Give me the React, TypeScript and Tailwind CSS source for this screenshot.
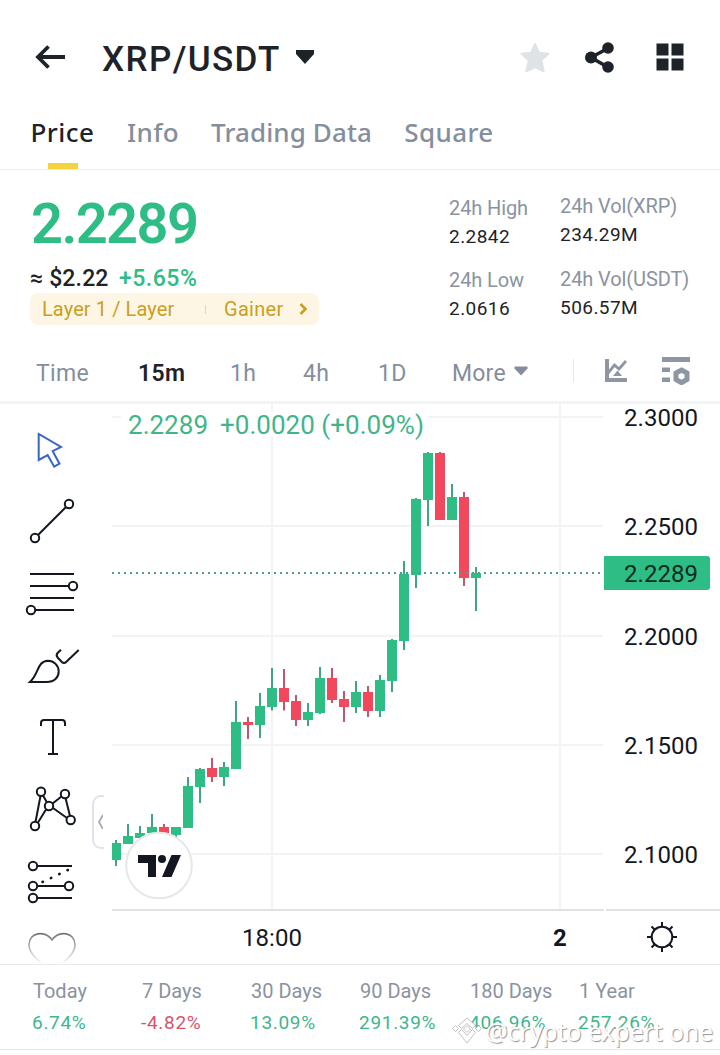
import { useState } from 'react';

type Candle = [high: number, top: number, bottom: number, low: number, up: boolean];

const GREEN = '#2ebd85';
const RED = '#f1485e';

// Candles are 12px apart, each given as high / body top / body bottom / low
const candles: Candle[] = [
  [840, 843, 860, 866, true],
  [824, 836, 844, 844, true],
  [826, 833, 838, 839, true],
  [814, 827, 833, 833, true],
  [824, 827, 835, 835, false],
  [827, 827, 835, 838, true],
  [777, 786, 828, 828, true],
  [768, 769, 787, 803, true],
  [758, 768, 777, 782, false],
  [762, 767, 777, 786, true],
  [701, 722, 769, 769, true],
  [717, 722, 725, 739, false],
  [693, 706, 725, 738, true],
  [668, 688, 707, 710.5, true],
  [669, 688, 702, 710.5, false],
  [695, 701, 720, 726, false],
  [703, 712, 720, 726, true],
  [667, 678, 713, 714, true],
  [668, 678, 700, 703, false],
  [691, 699, 707, 722, false],
  [681, 692, 707, 713, true],
  [686, 692, 711, 717, false],
  [675, 680, 711, 717, true],
  [639, 640, 681, 692, true],
  [561, 574, 641, 650, true],
  [498, 499, 575, 588, true],
  [452, 453, 500, 526, true],
  [452, 453, 520, 520, false],
  [484, 497, 520, 520, true],
  [492, 497, 578, 586, false],
  [567, 573, 578, 611, true]
];

const priceLevels = [
  { label: '2.3000', y: 417 },
  { label: '2.2500', y: 526 },
  { label: '2.2000', y: 636 },
  { label: '2.1500', y: 745 },
  { label: '2.1000', y: 854 }
];

const tabs = [
  { name: 'Price', className: 'w-[65px] tracking-[0.5px]' },
  { name: 'Info', className: 'w-[54px] tracking-[0.3px]' },
  { name: 'Trading Data', className: 'w-[161px] tracking-[0.1px]' },
  { name: 'Square', className: 'w-[92px] tracking-[0.4px]' }
];

const intervals = [
  { name: 'Time', className: 'w-[102px]' },
  { name: '15m', className: 'w-[92px]' },
  { name: '1h', className: 'w-[73px]' },
  { name: '4h', className: 'w-[75px]' },
  { name: '1D', className: 'w-[74px]' }
];

const stats = [
  { label: '24h High', value: '2.2842', className: 'pt-[2px]' },
  { label: '24h Vol(XRP)', value: '234.29M', className: '' },
  { label: '24h Low', value: '2.0616', className: 'pt-[1px]' },
  { label: '24h Vol(USDT)', value: '506.57M', className: '' }
];

const performance = [
  { label: 'Today', value: '6.74%', up: true, className: 'w-[109px]' },
  { label: '7 Days', value: '-4.82%', up: false, className: 'w-[109px]' },
  { label: '30 Days', value: '13.09%', up: true, className: 'w-[109px]' },
  { label: '90 Days', value: '291.39%', up: true, className: 'w-[110px]' },
  { label: '180 Days', value: '406.96%', up: true, className: 'w-[109px]' },
  { label: '1 Year', value: '257.26%', up: true, className: 'w-[100px]' }
];

function Header() {
  return (
    <header className="flex h-[108px] items-center pl-[35px] pr-9 pt-[6px]">
      <svg width="30" height="24" viewBox="0 0 30 24" fill="none" stroke="#1e2329" strokeWidth="3.8">
        <path d="M13.5 1.5 3 12l10.5 10.5M3 12h27" />
      </svg>
      <h1 className="ml-[37px] w-[178px] whitespace-nowrap pt-[4px] text-[35px] font-medium leading-none tracking-[1.4px] text-[#1e2329]">
        XRP/USDT
      </h1>
      <svg className="ml-[15px]" width="20" height="16" viewBox="0 0 20 16" fill="#1e2329">
        <path d="M1 1h18v4L10 15 1 5z" />
      </svg>
      <div className="ml-auto flex items-center gap-[35px]">
        <svg width="30" height="31" viewBox="0 0 30 31" fill="#dfe2e6" stroke="#dfe2e6" strokeWidth="2" strokeLinejoin="round">
          <path d="m15 2 4 8.8 9.5.9-7.2 6.6 2.4 11L15 25l-8.7 4.3 2.4-11-7.2-6.6 9.5-.9z" />
        </svg>
        <svg width="30" height="31" viewBox="0 0 30 31" fill="#1e2329">
          <path d="M23.5 6 6 15.5 23.5 25.5" fill="none" stroke="#1e2329" strokeWidth="3.6" />
          <circle cx="6" cy="15.5" r="6" />
          <circle cx="23" cy="6" r="5.8" />
          <circle cx="23" cy="25" r="5.8" />
        </svg>
        <svg className="ml-[6px]" width="28" height="28" viewBox="0 0 28 28" fill="#1e2329">
          <path d="M.5.5h12v12H.5zM15.5.5h12v12h-12zM.5 15.5h12v12H.5zM15.5 15.5h12v12h-12z" />
        </svg>
      </div>
    </header>
  );
}

function Ticker() {
  return (
    <section className="flex h-[170px] pl-[30px]">
      <div className="w-[419px] pt-[28px]">
        <div className="pl-[1px] text-[56px] font-semibold leading-[53px] tracking-[-1.6px] text-[#2ebd85]">2.2289</div>
        <div className="mt-[14px] flex text-[23px] font-medium leading-[27px]">
          <span className="w-[89px] whitespace-nowrap tracking-[0.15px] text-[#1e2329]">≈ $2.22</span>
          <span className="whitespace-nowrap tracking-[0.5px] text-[#2ebd85]">+5.65%</span>
        </div>
        <div className="mt-[1px] flex h-[32px] w-[289px] items-center rounded-lg bg-[#fef6e4] pl-3 text-[20px] text-[#c99f1e]">
          <span className="w-[163px] whitespace-nowrap tracking-[0.1px]">Layer 1 / Layer</span>
          <span className="h-[9px] w-px bg-[#ecd796]" />
          <span className="ml-[18px] w-[75px] tracking-[0.3px]">Gainer</span>
          <svg width="9" height="12" viewBox="0 0 9 12" fill="none" stroke="#c99f1e" strokeWidth="2.6">
            <path d="m1.5 1 5 5-5 5" />
          </svg>
        </div>
      </div>
      <div className="grid grid-cols-[111px_150px] content-start gap-y-[16px] pt-[22px]">
        {stats.map((stat) => (
          <div key={stat.label} className={`h-[57px] whitespace-nowrap ${stat.className}`}>
            <div className="text-[20px] leading-[28px] tracking-[-0.1px] text-[#8b939f]">{stat.label}</div>
            <div className="text-[19px] leading-[29px] tracking-[0.45px] text-[#1e2329]">{stat.value}</div>
          </div>
        ))}
      </div>
    </section>
  );
}

function IntervalBar() {
  const [active, setActive] = useState('15m');

  return (
    <nav className="flex h-[64px] items-center border-b-[3px] border-[#f2f3f4] pl-9 text-[23px] text-[#848e9c]">
      {intervals.map((item) => (
        <button
          key={item.name}
          onClick={() => setActive(item.name)}
          className={`pt-[7px] text-left tracking-[0.3px] ${item.className} ${active === item.name ? 'font-semibold text-[#1e2329]' : ''}`}
        >
          {item.name}
        </button>
      ))}
      <button className="flex w-[121px] items-center gap-[8px]">
        <span className="pt-[7px] tracking-[0.2px]">More</span>
        <svg width="14" height="10" viewBox="0 0 14 10" fill="#848e9c">
          <path d="M.5.5h13v2L7 9.500.5 2.500z" />
        </svg>
      </button>
      <span className="h-[23px] w-px bg-[#e3e6ea]" />
      <svg className="ml-[31px]" width="22" height="24" viewBox="0 0 22 24" fill="none" stroke="#8e96a3" strokeWidth="3">
        <path d="M2 0v21h20" strokeWidth="4" />
        <path d="M3 14 9.5 6l4.500 4L21 2" strokeWidth="2.8" />
        <path d="m8 17 4.500-5.500 4.500 5.500z" fill="#8e96a3" stroke="none" />
      </svg>
      <svg className="ml-[35px]" width="28" height="29" viewBox="0 0 28 29" fill="#8e96a3">
        <path d="M0 1h28v5H0zM0 11.500h8v4.500H0zM0 21.500h8v4.500H0z" />
        <path d="m19.500 14 5.500 3v6.500l-5.500 3.200-5.500-3.200V17z" fill="none" stroke="#8e96a3" strokeWidth="5" />
      </svg>
    </nav>
  );
}

const tools = [
  // cursor
  <path key="cursor" d="M38.700 19v26l9-4.800 6.500 11.500 5.300-3-6.800-12.500 8.300-4.200z" stroke="#3a66c8" />,
  // trend line
  <g key="trend">
    <path d="M38 48 66 20" />
    <circle cx="35" cy="51" r="4.200" />
    <circle cx="69" cy="17" r="4.200" />
  </g>,
  // fibonacci levels
  <g key="fib">
    <path d="M30 15h44M30 27h39M30 39h44M35 51h39" />
    <circle cx="73" cy="27" r="4.200" />
    <circle cx="31" cy="51" r="4.200" />
  </g>,
  // brush
  <g key="brush">
    <path d="M30 51C39 43 37 30 48 29.700c6 0 10.700 4.800 10.700 10.700 0 6-4.500 10.600-12 10.600z" />
    <path d="m61 18.700-3.200 3.100c-1.500 1.600-1.400 3.400 0 4.900l3.800 4c1.500 1.500 3.300 1.500 4.800 0L78.700 19" />
  </g>,
  // text
  <path key="text" d="M41 23v-3q0-3 3-3h18q3 0 3 3v3M53 17v34M48 51h10" />,
  // pattern
  <g key="pattern">
    <path d="m40.500 21-5 26M43 20.500l4 7M52.500 28.500l9-7M46 34.500 38 47.500M65.500 23l4.500 18M53 33l14 10" />
    <circle cx="41" cy="16.700" r="4.200" />
    <circle cx="65" cy="19" r="4.200" />
    <circle cx="49" cy="31" r="4.200" />
    <circle cx="35" cy="51" r="4.200" />
    <circle cx="70.700" cy="45" r="4.200" />
  </g>,
  // forecast
  <g key="forecast">
    <path d="M37 19h35M37 39h28M37 51h35" />
    <path d="m42.500 35 25.500-12" strokeDasharray="0.500 8.700" strokeLinecap="round" strokeWidth="2.600" />
    <circle cx="33" cy="19" r="4.200" />
    <circle cx="33" cy="39" r="4.200" />
    <circle cx="69" cy="39" r="4.200" />
    <circle cx="33" cy="51" r="4.200" />
  </g>,
  // favourites
  <path key="heart" d="M52 21c-7-10-23-8-23 5 0 11 16 20 23 27 7-7 23-16 23-27 0-13-16-15-23-5z" strokeWidth="1.600" />
];

function Toolbar() {
  return (
    <aside className="relative w-[104px] overflow-hidden pt-[11px]">
      {tools.map((tool, i) => (
        <svg key={i} className="block" width="104" height="72" viewBox="0 0 104 72" fill="none" stroke="#131722" strokeWidth="2">
          {tool}
        </svg>
      ))}
      <div className="absolute inset-x-0 bottom-0 h-[46px] bg-gradient-to-t from-white to-white/10" />
      <div className="absolute left-[92px] top-[391px] flex h-[54px] w-[20px] items-center rounded-l-[9px] border-2 border-[#e0e3eb] bg-white pl-[3px]">
        <svg width="6" height="16" viewBox="0 0 6 16" fill="none" stroke="#a3a9b5" strokeWidth="1.800">
          <path d="M6 1 2 8l4 7" />
        </svg>
      </div>
    </aside>
  );
}

function Chart() {
  return (
    <svg className="block" width="616" height="560" viewBox="104 404 616 560">
      <g stroke="#f3f3f4" strokeWidth="2">
        {priceLevels.map((level) => (
          <path key={level.label} d={`M112 ${level.y}H603`} />
        ))}
        <path d="M272 404V910M560 404V910" />
      </g>
      <path d="M112 910H604M606 910H720" stroke="#e0e2e5" strokeWidth="2" />

      <rect x="121" y="412" width="307" height="25" fill="#fff" />
      <g fontSize="26" fill="#3fb68a">
        <text x="128" y="434" textLength="80">2.2289</text>
        <text x="220" y="434" textLength="204">+0.0020 (+0.09%)</text>
      </g>

      {candles.map(([high, top, bottom, low, up], i) => {
        const x = 116 + i * 12;
        return (
          <g key={i}>
            <rect x={x - 1} y={high} width="2" height={low - high} fill={up ? '#3fa57e' : '#c4566c'} />
            <rect x={i === 0 ? 112 : x - 5} y={top} width={i === 0 ? 9 : 10} height={bottom - top} fill={up ? GREEN : RED} />
          </g>
        );
      })}
      <path d="M112 573H604" stroke="#4aa183" strokeWidth="2" strokeDasharray="2 4" />

      <g fontSize="24" fill="#131722">
        {priceLevels.map((level) => (
          <text key={level.label} x="624" y={level.y + 8.800} textLength="74">{level.label}</text>
        ))}
        <path d="M604 556h103q3 0 3 3v28q0 3-3 3H604z" fill={GREEN} />
        <text x="624" y="582" textLength="74" fill="#0c2b1f">2.2289</text>
        <text x="272" y="946" textAnchor="middle">18:00</text>
        <text x="560" y="946" textAnchor="middle" fontWeight="700">2</text>
      </g>

      {/* TradingView badge */}
      <circle cx="159" cy="865.500" r="32.800" fill="#fff" stroke="#e6e7e9" strokeWidth="2" />
      <path d="M138 855h18v22h-8v-14h-10zM171.500 855h9.500l-9.500 22h-9.500z" fill="#131722" />
      <circle cx="162" cy="859" r="4" fill="#131722" />

      <g stroke="#131722" strokeWidth="2" fill="none">
        <circle cx="662" cy="937" r="10.300" />
        <path d="M662 927v-5M662 947v5M652 937h-5M672 937h5M654.500 929.500l-3-3M669.500 929.500l3-3M654.500 944.500l-3 3M669.500 944.500l3 3" />
      </g>
    </svg>
  );
}

function Performance() {
  return (
    <section className="flex h-[86px] border-y border-[#e6e8ea] pl-8 pt-[10px]">
      {performance.map((item) => (
        <div key={item.label} className={`whitespace-nowrap ${item.className}`}>
          <div className="pl-[1px] text-[20px] leading-[32px] text-[#8b939f]">{item.label}</div>
          <div className={`text-[19px] leading-[32px] tracking-[0.7px] ${item.up ? 'text-[#3fb68a]' : 'text-[#d9536a]'}`}>
            {item.value}
          </div>
        </div>
      ))}
    </section>
  );
}

function Watermark() {
  return (
    <div className="absolute bottom-[7px] right-[7px] flex items-center gap-[3px]">
      <svg width="30" height="28" viewBox="0 0 30 28" fill="#fff" stroke="#aeb2b8" strokeWidth="0.800">
        <path d="m15 1 8.500 7.500-3 3L15 6.500l-5.500 5-3-3zM3.500 8.500l3 3-3 3-3-3zM26.500 8.500l3 3-3 3-3-3zM15 8.500l3.500 3.500-3.500 3.500-3.500-3.500zM6.500 15.500l3-3 5.500 6 5.500-6 3 3L15 26z" />
      </svg>
      <span className="whitespace-nowrap font-['Noto_Sans'] text-[25px] leading-[34px] tracking-[-0.15px] text-white [text-shadow:1px_1px_1px_#8f949b]">
        @crypto expert one
      </span>
    </div>
  );
}

export default function App() {
  const [activeTab, setActiveTab] = useState('Price');

  return (
    <div className="relative h-[1055px] w-[720px] overflow-hidden bg-white font-['Roboto',sans-serif]">
      <Header />

      {/* Section tabs */}
      <nav className="flex h-[62px] gap-[31px] border-b border-[#eaecef] pl-[30px] font-['Noto_Sans',sans-serif] text-[26px] font-medium">
        {tabs.map((tab) => (
          <button
            key={tab.name}
            onClick={() => setActiveTab(tab.name)}
            className={`flex h-[61px] flex-col items-center whitespace-nowrap ${tab.className} ${
              activeTab === tab.name ? 'text-[#1e2329]' : 'text-[#848e9c]'
            }`}
          >
            <span className="leading-[49px]">{tab.name}</span>
            {activeTab === tab.name && <span className="mt-auto h-[6px] w-[30px] bg-[#f5d33f]" />}
          </button>
        ))}
      </nav>

      <Ticker />
      <IntervalBar />

      <main className="flex h-[560px]">
        <Toolbar />
        <Chart />
      </main>

      <Performance />
      <Watermark />
    </div>
  );
}
